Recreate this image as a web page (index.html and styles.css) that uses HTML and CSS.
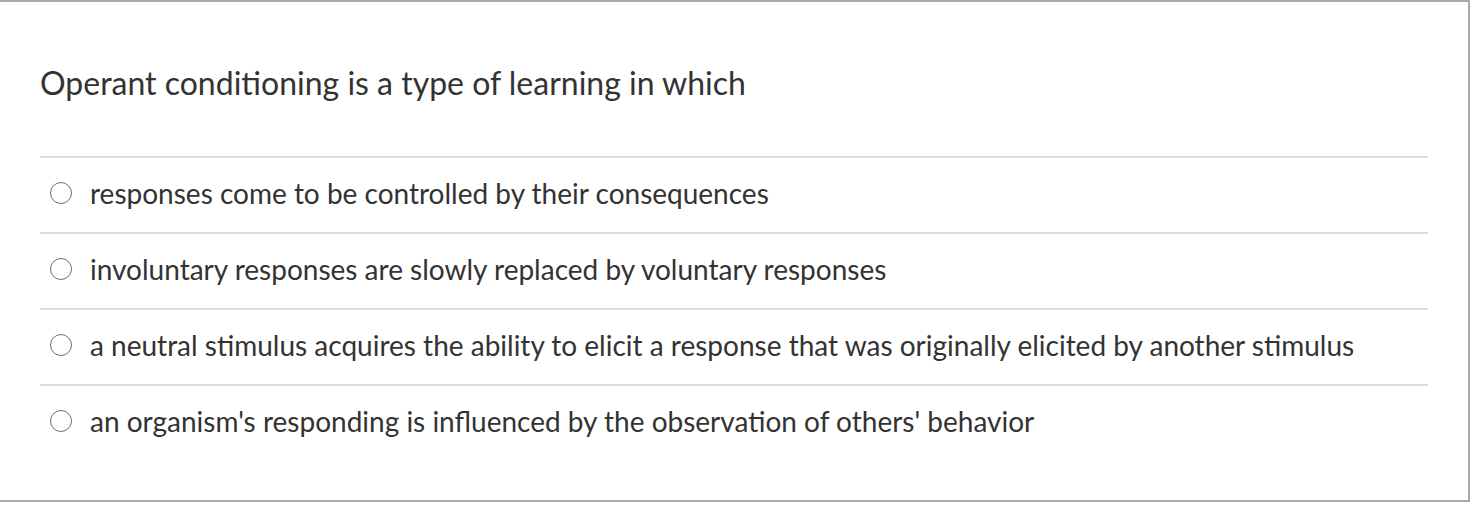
FILE: index.html
```html
<!DOCTYPE html>
<html lang="en">
<head>
<meta charset="utf-8">
<title>Question</title>
<link rel="stylesheet" href="styles.css">
</head>
<body>
<div class="card">
  <div class="question">Operant conditioning is a type of learning in which</div>
  <div class="answers">
    <label class="answer"><span class="radio"></span><span class="text">responses come to be controlled by their consequences</span></label>
    <label class="answer"><span class="radio"></span><span class="text">involuntary responses are slowly replaced by voluntary responses</span></label>
    <label class="answer"><span class="radio"></span><span class="text">a neutral stimulus acquires the ability to elicit a response that was originally elicited by another stimulus</span></label>
    <label class="answer"><span class="radio"></span><span class="text">an organism's responding is influenced by the observation of others' behavior</span></label>
  </div>
</div>
</body>
</html>
```

FILE: styles.css
```css
html, body {
  margin: 0;
  padding: 0;
  background: #fff;
}
body {
  font-family: Lato, "Liberation Sans", sans-serif;
  color: #333;
}
.card {
  box-sizing: border-box;
  width: 1470px;
  height: 502px;
  border-top: 2px solid #aaa;
  border-right: 2px solid #aaa;
  border-bottom: 2px solid #aaa;
  padding: 0 40px 0 40px;
}
.question {
  font-size: 32px;
  line-height: 38px;
  padding-top: 62px;
  padding-bottom: 54px;
}
.answers {
  display: flex;
  flex-direction: column;
}
.answer {
  display: flex;
  align-items: center;
  height: 76px;
  box-sizing: border-box;
  border-top: 2px solid #ddd;
  font-size: 28px;
  padding-bottom: 4px;
}
.radio {
  flex: none;
  box-sizing: border-box;
  width: 22px;
  height: 22px;
  border: 1.5px solid #6f6f6f;
  border-radius: 50%;
  margin-left: 10px;
  margin-right: 18px;
}
.text {
  line-height: 34px;
}
```
